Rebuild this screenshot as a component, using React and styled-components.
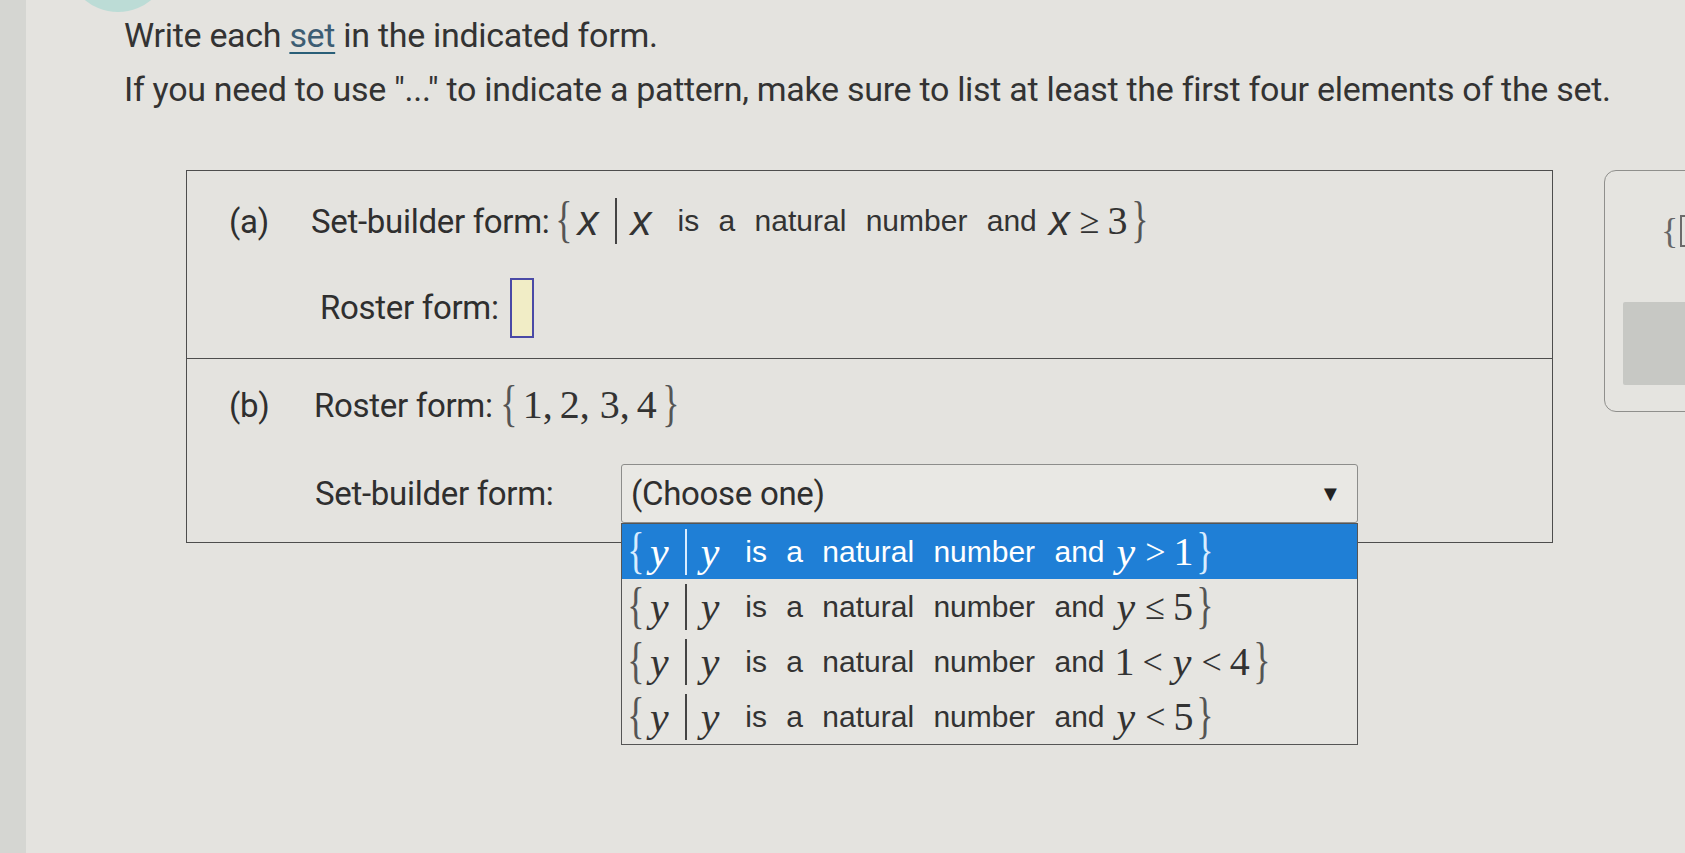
import React from 'react';
import styled, { createGlobalStyle } from 'styled-components';

const GlobalStyle = createGlobalStyle`
  html, body {
    margin: 0;
    padding: 0;
    overflow: hidden;
  }
  body {
    background: #e4e3df;
    color: #2f2f2f;
    font-family: Roboto, "Liberation Sans", Arial, sans-serif;
  }
`;

const Page = styled.div`
  display: flex;
  min-height: 853px;
  width: 1685px;
`;

const Strip = styled.div`
  width: 26px;
  flex-shrink: 0;
  background: #d5d6d2;
`;

const Main = styled.div`
  position: relative;
  flex: 1;
  padding: 15px 0 0 98px;
  min-width: 0;
`;

const Badge = styled.div`
  position: absolute;
  left: 40px;
  top: -92px;
  width: 104px;
  height: 104px;
  border-radius: 50%;
  background: #bcdcd6;
`;

const Heading = styled.p`
  margin: 0 0 ${(p) => p.$gap || 0}px;
  font-size: 34px;
  line-height: 40px;
  letter-spacing: -0.3px;
  color: #333;
  white-space: nowrap;
`;

const SetLink = styled.span`
  color: #3d5d73;
  text-decoration: underline;
  text-decoration-color: #2a5f78;
  text-decoration-thickness: 2px;
  text-underline-offset: 5px;
`;

const Workspace = styled.div`
  display: flex;
  align-items: flex-start;
  margin-left: 62px;
`;

const QuestionTable = styled.div`
  width: 1365px;
  flex-shrink: 0;
  border: 1.5px solid #4d4d4d;
`;

const Part = styled.div`
  display: flex;
  flex-direction: column;
  gap: 37px;
  padding: ${(p) => p.$pad};
  & + & {
    border-top: 1.5px solid #4d4d4d;
  }
`;

const PartLine = styled.div`
  display: flex;
  align-items: center;
  height: ${(p) => p.$h || 40}px;
  padding-left: 42px;
  font-size: 33px;
  letter-spacing: -0.3px;
  white-space: nowrap;
`;

const Label = styled.span`
  width: ${(p) => p.$w}px;
  flex-shrink: 0;
`;

const AnswerLine = styled.div`
  display: flex;
  align-items: center;
  height: 59px;
  padding-left: ${(p) => p.$indent}px;
  font-size: 33px;
  letter-spacing: -0.3px;
  white-space: nowrap;
`;

const AnswerBox = styled.span`
  display: inline-block;
  width: 20px;
  height: 56px;
  margin-left: 11px;
  border: 2px solid #4a4aa6;
  background: #f1edc6;
`;

/* math */

const MathRow = styled.span`
  display: inline-flex;
  align-items: center;
  margin-left: ${(p) => p.$ml || 0}px;
  color: ${(p) => (p.$light ? '#ffffff' : '#333')};
  letter-spacing: 0;
  white-space: nowrap;
`;

const Brace = styled.span`
  font-family: "Liberation Serif", "DejaVu Serif", serif;
  font-size: 50px;
  line-height: 1;
  margin-top: -4px;
  transform: scaleX(0.72);
  color: ${(p) => (p.$light ? '#d8ecff' : '#555')};
`;

const Var = styled.span`
  font-family: ${(p) =>
    p.$sans
      ? '"Liberation Sans", Arial, sans-serif'
      : '"Liberation Serif", "DejaVu Serif", serif'};
  font-style: italic;
  font-size: ${(p) => (p.$sans ? 42 : 42)}px;
  line-height: 1;
  margin: 0 2px;
`;

const Num = styled.span`
  font-family: "Liberation Serif", "DejaVu Serif", serif;
  font-size: 40px;
  line-height: 1;
  margin: 0 ${(p) => p.$mx || 0}px;
`;

const Bar = styled.span`
  display: inline-block;
  width: 2px;
  height: 46px;
  margin: 0 12px 0 14px;
  background: ${(p) => (p.$light ? '#d8ecff' : '#444')};
`;

const Words = styled.span`
  font-family: "Liberation Sans", Arial, sans-serif;
  font-size: 30px;
  word-spacing: 11px;
  margin: 0 10px 0 24px;
`;

const Rel = styled.span`
  font-family: "Liberation Serif", "DejaVu Serif", serif;
  font-size: 36px;
  margin: 0 8px;
`;

const SetBuilder = ({ v, sans, tail, light, ml }) => (
  <MathRow $light={light} $ml={ml}>
    <Brace $light={light}>{'{'}</Brace>
    <Var $sans={sans}>{v}</Var>
    <Bar $light={light} />
    <Var $sans={sans}>{v}</Var>
    <Words>is a natural number and</Words>
    {tail}
    <Brace $light={light}>{'}'}</Brace>
  </MathRow>
);

/* select */

const Select = styled.div`
  position: relative;
  width: 737px;
  height: 59px;
  box-sizing: border-box;
  display: flex;
  align-items: center;
  justify-content: space-between;
  padding: 0 16px 0 9px;
  border: 1px solid #8d8d8b;
  border-radius: 3px;
  background: #e9e8e4;
  font-size: 33px;
  letter-spacing: -0.3px;
`;

const Arrow = styled.span`
  font-size: 22px;
  color: #222;
`;

const Menu = styled.ul`
  position: absolute;
  top: 100%;
  left: -1px;
  width: 735px;
  margin: 1px 0 0;
  padding: 0;
  list-style: none;
  border: 1.5px solid #555;
  background: #e6e5e1;
`;

const Option = styled.li`
  display: flex;
  align-items: center;
  height: 55px;
  padding-left: 2px;
  background: ${(p) => (p.$active ? '#1f7fd6' : 'transparent')};
`;

/* side panel */

const SidePanel = styled.div`
  flex-shrink: 0;
  width: 200px;
  height: 242px;
  margin-left: 51px;
  box-sizing: border-box;
  border: 1.5px solid #8f8f8c;
  border-radius: 12px;
  background: #e5e4e0;
  padding: 42px 0 0 18px;
`;

const Preview = styled.div`
  display: flex;
  align-items: center;
  margin-left: 38px;
  color: #666;
`;

const PreviewBrace = styled.span`
  font-family: "Liberation Serif", serif;
  font-size: 36px;
  line-height: 1;
`;

const PreviewBox = styled.span`
  width: 24px;
  height: 28px;
  border: 2px solid #6b6b6b;
  margin-left: 2px;
`;

const GrayBlock = styled.div`
  width: 190px;
  height: 83px;
  margin-top: 53px;
  background: #c7c8c4;
  border-radius: 2px;
`;

const options = [
  { tail: <><Var>y</Var><Rel>&gt;</Rel><Num>1</Num></>, active: true },
  { tail: <><Var>y</Var><Rel>≤</Rel><Num>5</Num></> },
  { tail: <><Num>1</Num><Rel>&lt;</Rel><Var>y</Var><Rel>&lt;</Rel><Num>4</Num></> },
  { tail: <><Var>y</Var><Rel>&lt;</Rel><Num>5</Num></> },
];

export default function App() {
  return (
    <>
      <GlobalStyle />
      <Page>
        <Strip />
        <Main>
          <Badge />
          <Heading $gap={14}>
            Write each <SetLink>set</SetLink> in the indicated form.
          </Heading>
          <Heading $gap={61}>
            If you need to use "..." to indicate a pattern, make sure to list at least the first four elements of the set.
          </Heading>
          <Workspace>
            <QuestionTable>
              <Part $pad="30px 0 21px">
                <PartLine>
                  <Label $w={82}>(a)</Label>
                  <span>Set-builder form:</span>
                  <SetBuilder
                    v="x"
                    sans
                    ml={2}
                    tail={<><Var $sans>x</Var><Rel>≥</Rel><Num>3</Num></>}
                  />
                </PartLine>
                <AnswerLine $indent={133}>
                  Roster form:
                  <AnswerBox />
                </AnswerLine>
              </Part>
              <Part $pad="24px 0 19px">
                <PartLine $h={44}>
                  <Label $w={85}>(b)</Label>
                  <span>Roster form:</span>
                  <MathRow $ml={4}>
                    <Brace>{'{'}</Brace>
                    <Num $mx={2}>1,</Num>
                    <Num $mx={5}>2,</Num>
                    <Num $mx={5}>3,</Num>
                    <Num $mx={2}>4</Num>
                    <Brace>{'}'}</Brace>
                  </MathRow>
                </PartLine>
                <AnswerLine $indent={128}>
                  <Label $w={306}>Set-builder form:</Label>
                  <Select>
                    (Choose one)
                    <Arrow>▼</Arrow>
                    <Menu>
                      {options.map((o, i) => (
                        <Option key={i} $active={o.active}>
                          <SetBuilder v="y" tail={o.tail} light={o.active} />
                        </Option>
                      ))}
                    </Menu>
                  </Select>
                </AnswerLine>
              </Part>
            </QuestionTable>
            <SidePanel>
              <Preview>
                <PreviewBrace>{'{'}</PreviewBrace>
                <PreviewBox />
              </Preview>
              <GrayBlock />
            </SidePanel>
          </Workspace>
        </Main>
      </Page>
    </>
  );
}
